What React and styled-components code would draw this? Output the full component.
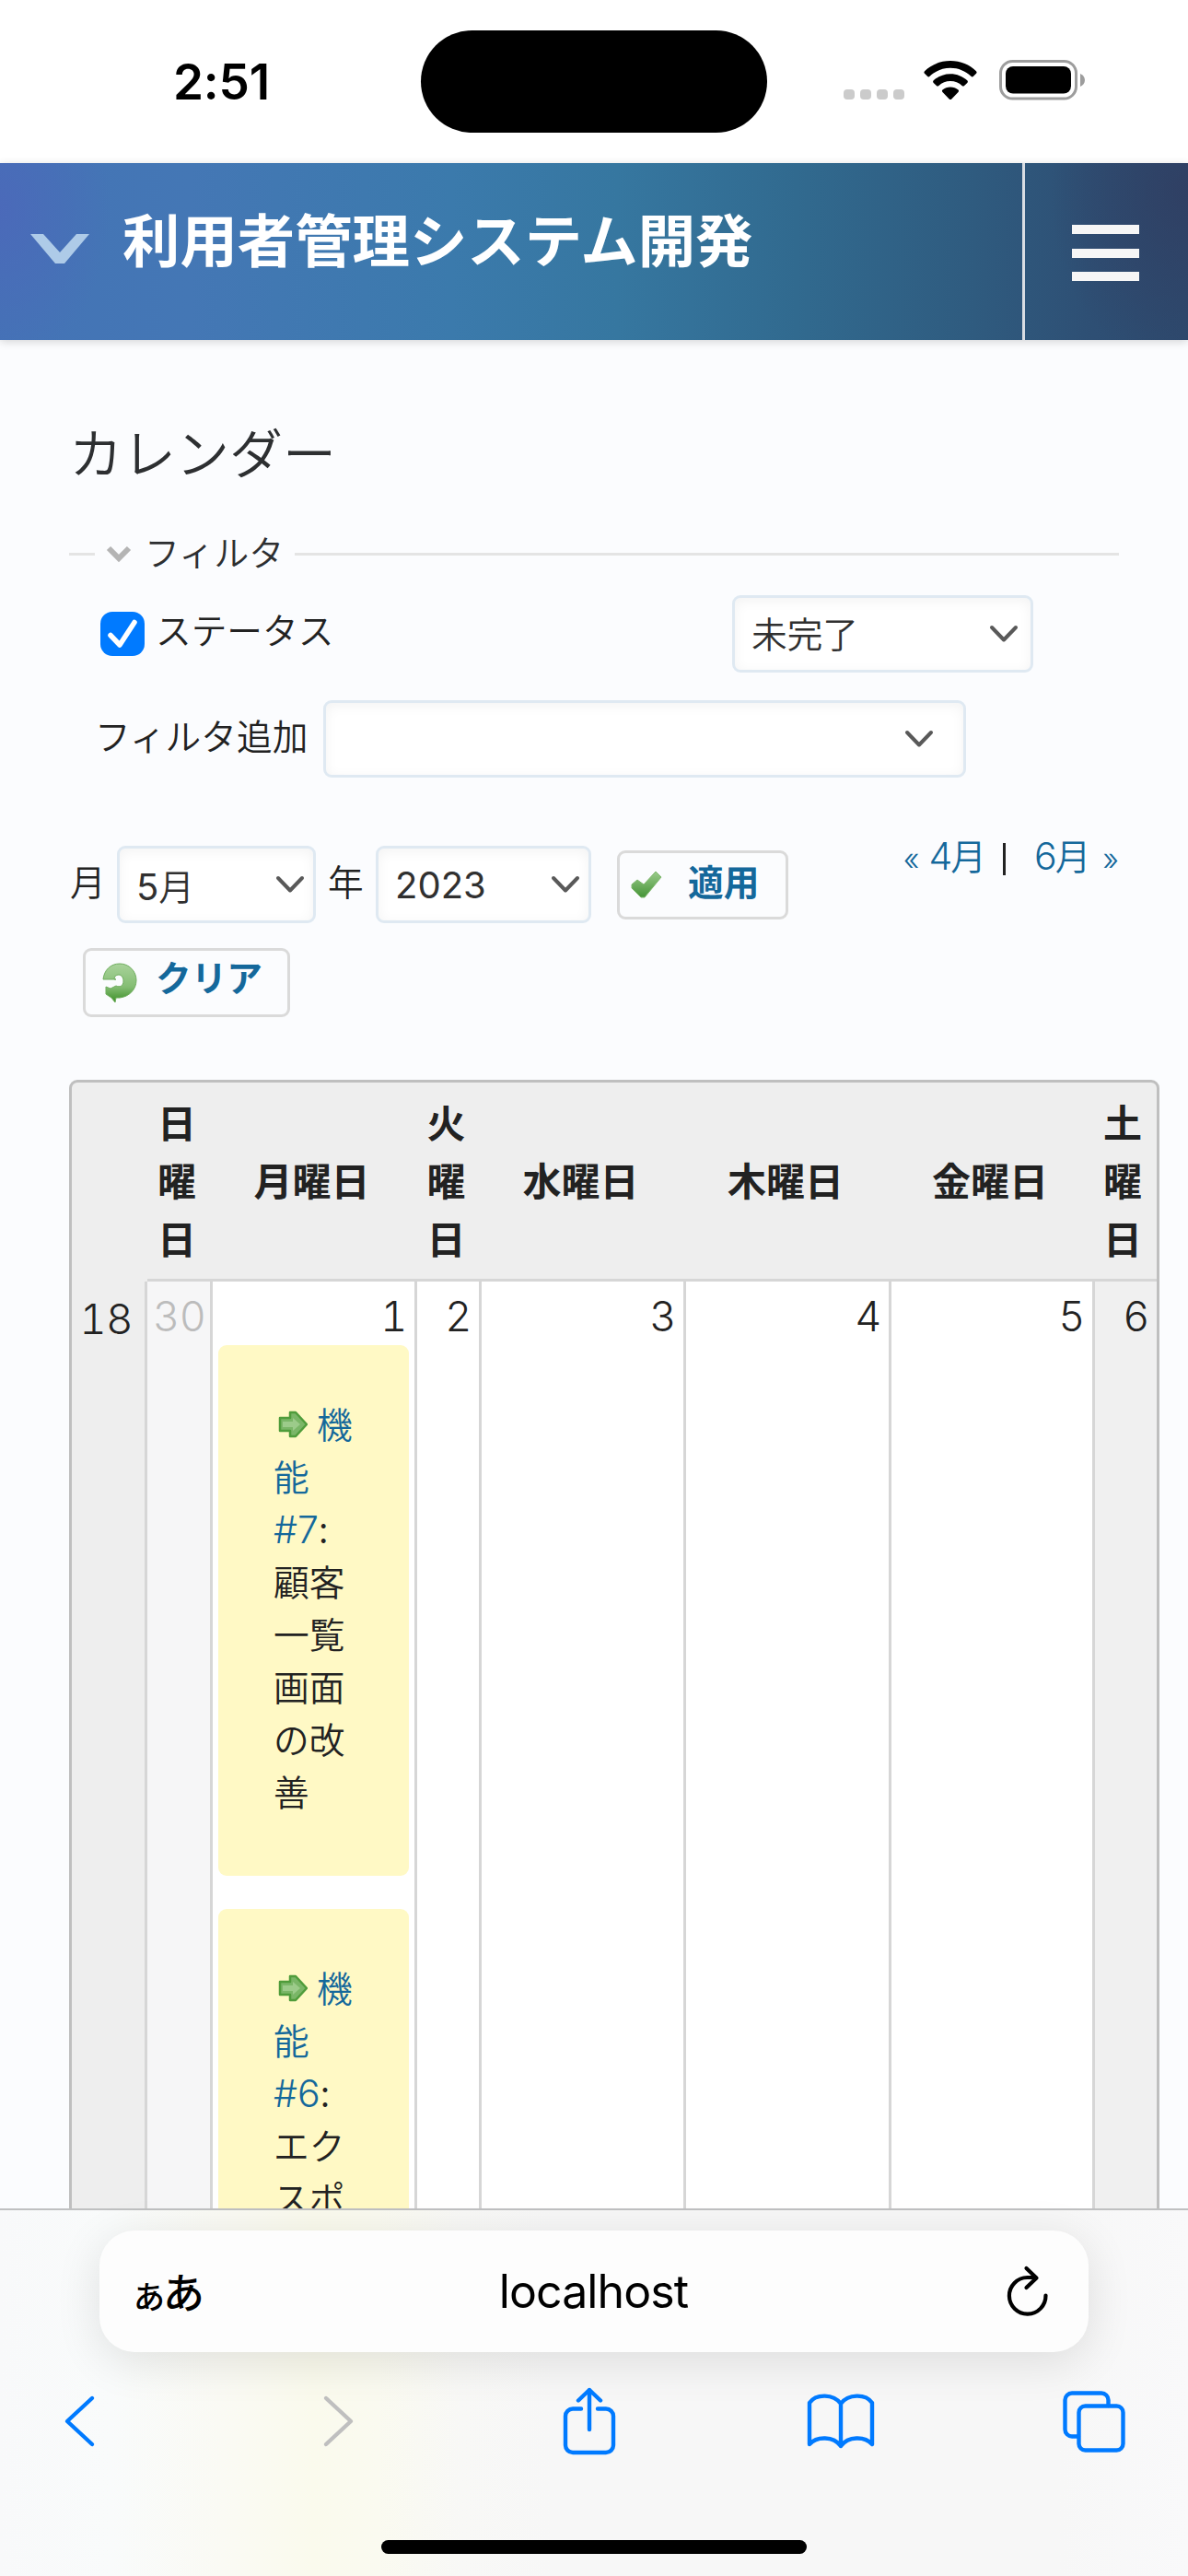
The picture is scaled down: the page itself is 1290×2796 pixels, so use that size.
import styled, { createGlobalStyle } from 'styled-components'

const GlobalStyle = createGlobalStyle`
  * {
    box-sizing: border-box;
  }
  body {
    margin: 0;
    background: #fff;
    font-family: "Noto Sans CJK JP", sans-serif;
    font-weight: 350;
    color: #222;
  }
  svg {
    display: block;
    flex: none;
  }
`

const Screen = styled.div`
  width: 1290px;
  height: 2796px;
  display: flex;
  flex-direction: column;
  overflow: hidden;
`

const StatusBar = styled.div`
  height: 177px;
  flex: none;
  display: grid;
  grid-template-columns: 457px 376px 457px;
  align-items: center;
  background: #fff;
`

const Clock = styled.span`
  padding-left: 188px;
  font: 600 53px/60px Inter, sans-serif;
  letter-spacing: -0.2px;
  color: #000;
`

const Island = styled.div`
  height: 111px;
  border-radius: 56px;
  background: #000;
`

const StatusIcons = styled.div`
  display: flex;
  align-items: center;
  padding: 0 0 3px 83px;
`

const SignalDots = styled.div`
  display: flex;
  gap: 6px;
  margin: 30px 21px 0 0;

  i {
    width: 12px;
    height: 11px;
    border-radius: 4px;
    background: #cbcbcb;
  }
`

const Header = styled.header`
  position: relative;
  height: 192px;
  flex: none;
  display: flex;
  background:
    radial-gradient(ellipse 120px 170px at 0 50px, rgba(76, 104, 186, 0.85), rgba(76, 104, 186, 0)),
    radial-gradient(ellipse 150px 200px at 1290px 30px, rgba(48, 62, 98, 0.85), rgba(48, 62, 98, 0)),
    linear-gradient(90deg, #4473b6 0%, #4477b5 16%, #3b7aac 38%, #3677a0 52%, #316a8f 67%, #2f5b7f 82%, #2e4f74 92%, #2d4a6e 100%);
  box-shadow: 0 2px 9px rgba(0, 0, 0, 0.16);
`

const ProjectPicker = styled.div`
  width: 1110px;
  display: flex;
  align-items: center;
  padding-left: 33px;

  svg {
    margin-bottom: 7px;
  }
`

const ProjectName = styled.h1`
  margin: 0 0 30px 36px;
  font-size: 62.4px;
  line-height: 80px;
  font-weight: 700;
  color: #fff;
`

const MenuButton = styled.div`
  width: 180px;
  border-left: 3px solid #d9dde3;
  padding: 67px 52px 0 51px;
  display: flex;
  flex-direction: column;
  gap: 15.5px;

  i {
    width: 73px;
    height: 10px;
    background: #f6f6f6;
  }
`

const Content = styled.main`
  height: 2028px;
  flex: none;
  overflow: hidden;
  padding: 80px 75px 0;
  background: #fbfcfe;
`

const PageTitle = styled.h2`
  margin: 0;
  font-size: 58px;
  line-height: 80px;
  font-weight: 350;
  color: #2d2f31;
`

const Legend = styled.div`
  display: flex;
  align-items: center;
  height: 60px;
  margin-top: 42px;
  font-size: 38px;
  color: #2d2f31;

  span {
    margin: 0 12px 7px 14px;
  }
`

const Rule = styled.i`
  height: 3px;
  background: #e4e4e4;
  ${({ $width }) => ($width ? `width: ${$width}px; margin-right: 12px;` : 'flex: 1;')}
`

const FilterRow = styled.div`
  display: flex;
  align-items: center;
  height: 84px;
  margin-top: ${({ $top }) => $top}px;
  padding-left: ${({ $left }) => $left}px;
  font-size: 38.7px;
`

const FilterName = styled.span`
  width: 638px;
  padding-left: 12px;
  margin-bottom: 12px;
`

const AddLabel = styled.span`
  width: 248px;
  margin-bottom: 11px;
`

const Checkbox = styled.span`
  width: 48px;
  height: 48px;
  border-radius: 13px;
  background: #007aff;
`

const SelectBox = styled.div`
  width: ${({ $width }) => $width}px;
  height: 84px;
  display: flex;
  align-items: center;
  justify-content: space-between;
  padding: 0 ${({ $right }) => $right || 9}px 0 18px;
  border: 3px solid #dfe9f2;
  border-radius: 9px;
  background: #fff;
  box-shadow: inset 0 3px 14px rgba(0, 0, 0, 0.05);
  font-family: Inter, "Noto Sans CJK JP", sans-serif;
  font-size: ${({ $size }) => $size || 38.7}px;
  font-weight: 400;
  color: #303030;
  white-space: nowrap;

  em {
    font-size: 38.7px;
    font-style: normal;
    font-weight: 350;
    margin-bottom: 5px;
  }
`

const DateForm = styled.div`
  display: flex;
  justify-content: space-between;
  margin-top: 74px;
  font-size: 38.7px;
`

const DateFields = styled.div`
  display: flex;
  flex-wrap: wrap;
  align-items: center;
  width: 790px;
  row-gap: 27px;
`

const FieldLabel = styled.span`
  width: ${({ $width }) => $width}px;
  padding-left: ${({ $left }) => $left || 0}px;
  margin-bottom: 10px;
`

const ActionButton = styled.div`
  height: 75px;
  width: ${({ $width }) => $width}px;
  margin-left: ${({ $left }) => $left}px;
  display: flex;
  align-items: center;
  padding-left: ${({ $pad }) => $pad}px;
  border: 3px solid #dadada;
  border-radius: 9px;
  font-weight: 700;
  color: #14689b;

  span {
    margin: 0 0 ${({ $lift }) => $lift || 11}px ${({ $gap }) => $gap}px;
  }
`

const MonthLinks = styled.div`
  display: flex;
  align-items: baseline;
  height: 40px;
  line-height: 18px;
`

const Link = styled.a`
  color: #14689b;
`

const Latin = styled.span`
  font-family: Inter, sans-serif;
  font-size: 41px;
  font-weight: 300;
`

const Guillemet = styled.span`
  margin: ${({ $end }) => ($end ? '0 0 0 13px' : '0 10px 0 0')};
  font: 300 33px/18px Inter, sans-serif;
`

const MonthLink = styled(Link)`
  ${Latin} {
    letter-spacing: -2px;
  }
`

const Divider = styled.i`
  width: 3px;
  height: 35px;
  margin: 0 31px 0 18px;
  align-self: flex-start;
  transform: translateY(-3px);
  background: #222;
`

const Calendar = styled.div`
  width: 1184px;
  margin-top: 68px;
  display: grid;
  grid-template-columns: 82px 71px 222px 70px 222px 223px 221px 67px;
  grid-template-rows: 216px 1400px;
  border: 3px solid #bfbfbf;
  border-radius: 9px;
  overflow: hidden;
  background: #eee;
`

const DayName = styled.div`
  display: flex;
  align-items: center;
  justify-content: center;
  padding: 0 15px 5px 8px;
  border-bottom: 3px solid ${({ $blank }) => ($blank ? '#eee' : '#d6d6d6')};
  font-size: 42px;
  line-height: 63px;
  font-weight: 700;
  word-break: break-all;
  text-align: center;
`

const DayCell = styled.div`
  padding: 6px 6px 0;
  border-right: ${({ $last }) => ($last ? 0 : 3)}px solid #d6d6d6;
  background: ${({ $bg }) => $bg || '#fff'};
`

const DayNumber = styled.div`
  padding-right: 2px;
  font-family: Inter, sans-serif;
  font-feature-settings: "tnum";
  font-weight: 300;
  font-size: 45px;
  line-height: 63px;
  letter-spacing: -0.4px;
  text-align: right;
  white-space: nowrap;
  color: ${({ $muted }) => ($muted ? '#bcbcbc' : '#222')};
`

const WeekCell = styled(DayCell)`
  padding-top: 9px;

  ${DayNumber} {
    padding-right: 7px;
  }
`

const Issue = styled.div`
  width: 207px;
  height: 576px;
  margin-bottom: 36px;
  padding: 56px 60px 0;
  border-radius: 9px;
  background: #fff9c5;
  font-size: 38.7px;
  line-height: 57px;

  p {
    margin: 0;
    width: 88px;
  }
  svg {
    display: inline-block;
    margin: 0 10px 0 5px;
  }
  ${Latin} {
    line-height: 50px;
  }
`

const BottomBar = styled.footer`
  height: 399px;
  flex: none;
  display: flex;
  flex-direction: column;
  align-items: center;
  border-top: 2px solid #bfc0c1;
  background: linear-gradient(90deg, #f8f9fa 0, #f9fbfb 120px, #fafaf4 240px, #fafaed 340px, #fafaf0 410px, #f8f8f6 500px, #f7f7f7 600px, #f7f7f7 1150px, #f9f9fa 1290px);
`

const AddressBar = styled.div`
  width: 1074px;
  height: 132px;
  margin-top: 22px;
  padding: 0 44px 0 37px;
  display: flex;
  align-items: center;
  justify-content: space-between;
  border-radius: 38px;
  background: #fdfdfd;
  box-shadow: 0 10px 50px rgba(0, 0, 0, 0.11);
  color: #000;
`

const Translate = styled.span`
  width: 90px;
  margin-bottom: 2px;
  font-size: 45px;
  font-weight: 500;
  letter-spacing: -2px;
  white-space: nowrap;

  small {
    font-size: 34px;
  }
`

const Host = styled.span`
  padding-left: 6px;
  font: 400 50px/60px Inter, sans-serif;
  letter-spacing: -0.9px;
`

const NavBar = styled.nav`
  width: 100%;
  height: 150px;
  display: grid;
  grid-template-columns: 163px 276px 267px 280px 169px;
  align-items: center;
  justify-items: center;
  padding: 0 68px 0 67px;

  svg:first-child {
    justify-self: start;
  }
  svg:last-child {
    justify-self: end;
  }
`

const HomeIndicator = styled.div`
  width: 462px;
  height: 15px;
  margin-top: 54px;
  border-radius: 8px;
  background: #000;
`

const ArrowDown = () => (
  <svg width="32" height="20" viewBox="0 0 32 20" fill="none">
    <path d="M3 3l13 13.500L29 3" stroke="#595959" strokeWidth="4" strokeLinecap="round" strokeLinejoin="round" />
  </svg>
)

const WifiIcon = () => (
  <svg width="58" height="43" viewBox="0 0 58 43">
    <path d="M29 0C40 0 50 4.300 57 11.200c.8.8.8 1.800 0 2.600l-3 3c-.8.8-1.800.8-2.600 0C45.500 11.200 37.600 7.800 29 7.800S12.500 11.200 6.600 16.800c-.8.8-1.800.8-2.600 0l-3-3c-.8-.8-.8-1.800 0-2.600C8 4.300 18 0 29 0z" />
    <path d="M29 14.200c7.100 0 13.500 2.700 18.300 7.100.8.8.8 1.800 0 2.600l-3.200 3.100c-.8.8-1.700.7-2.500 0-3.400-3-7.800-4.900-12.600-4.900s-9.200 1.900-12.600 4.900c-.8.7-1.700.8-2.500 0l-3.200-3.100c-.8-.8-.8-1.800 0-2.600 4.800-4.400 11.200-7.100 18.300-7.100z" />
    <path d="M29 28.400c3.200 0 6.200 1.200 8.500 3.200.8.7.8 1.700 0 2.500l-7.200 7.300c-.8.8-1.800.8-2.600 0l-7.200-7.300c-.8-.8-.8-1.800 0-2.500 2.300-2 5.300-3.200 8.500-3.200z" />
  </svg>
)

const BatteryIcon = () => (
  <svg width="95" height="44" viewBox="0 0 95 44">
    <rect x="1.500" y="1.500" width="82" height="40.500" rx="13" fill="none" stroke="#9d9d9d" strokeWidth="3" />
    <rect x="7" y="7" width="71" height="29.500" rx="8" />
    <path d="M88 15v14c3-1.200 5-4 5-7s-2-5.800-5-7z" fill="#9d9d9d" />
  </svg>
)

const CheckIcon = () => (
  <svg width="34" height="32" viewBox="0 0 34 32">
    <defs>
      <linearGradient id="check" x1="0" y1="0" x2="0" y2="1">
        <stop offset="0" stopColor="#9bcb8b" />
        <stop offset="1" stopColor="#459437" />
      </linearGradient>
    </defs>
    <path d="M1 16l6-5 7 5L27 2l6 6-18 22h-4L1 20z" fill="url(#check)" stroke="#7fb86e" strokeWidth="1" />
  </svg>
)

const ReloadGreenIcon = () => (
  <svg width="38" height="44" viewBox="0 0 38 44">
    <defs>
      <linearGradient id="reload" x1="0" y1="0" x2="0" y2="1">
        <stop offset="0" stopColor="#a9d39b" />
        <stop offset="0.6" stopColor="#84bd73" />
        <stop offset="1" stopColor="#3b8f27" />
      </linearGradient>
    </defs>
    <path
      d="M1 18C2 8 9 1 19 1c10 0 18 8 18 18S29 37 19 38l-4 0-1 5-4-5-6-4v-8l5 2 6-3c4 2 8 0 8-5 0-4-2-7-5-7-3 0-5 2-5 5l2 0z"
      fill="url(#reload)"
      stroke="#6fad5e"
      strokeWidth="1"
    />
  </svg>
)

const IssueArrow = () => (
  <svg width="32" height="30" viewBox="0 0 32 30">
    <path d="M2 8h11V2h6l12 13-12 13h-6v-6H2z" fill="#7ab667" stroke="#4f9c3b" strokeWidth="2.500" strokeLinejoin="round" />
    <path d="M5 12h11V8l8 7-8 7v-4H5z" fill="#9ccb8a" />
  </svg>
)

const NavIcon = ({ width, height, color = '#007aff', children }) => (
  <svg width={width} height={height} viewBox={`0 0 ${width} ${height}`} fill="none" stroke={color} strokeWidth="4.400" strokeLinecap="round" strokeLinejoin="round">
    {children}
  </svg>
)

const dayNames = ['', '日曜日', '月曜日', '火曜日', '水曜日', '木曜日', '金曜日', '土曜日']

const issues = [
  { id: 7, subject: '顧客一覧画面の改善' },
  { id: 6, subject: 'エクスポート機能' },
]

const days = [
  { day: 30, muted: true, bg: '#f6f6f7' },
  { day: 1, issues },
  { day: 2 },
  { day: 3 },
  { day: 4 },
  { day: 5 },
  { day: 6, bg: '#f0f0f0' },
]

function App () {
  return (
    <Screen>
      <GlobalStyle />
      <StatusBar>
        <Clock>2:51</Clock>
        <Island />
        <StatusIcons>
          <SignalDots><i /><i /><i /><i /></SignalDots>
          <WifiIcon />
          <svg width="24" height="1" />
          <BatteryIcon />
        </StatusIcons>
      </StatusBar>

      <Header>
        <ProjectPicker>
          <svg width="64" height="32" viewBox="0 0 64 32">
            <path d="M0 0h14l18 20L50 0h14L37 32H27z" fill="#aecbe8" />
          </svg>
          <ProjectName>利用者管理システム開発</ProjectName>
        </ProjectPicker>
        <MenuButton><i /><i /><i /></MenuButton>
      </Header>

      <Content>
        <PageTitle>カレンダー</PageTitle>
        <Legend>
          <Rule $width={28} />
          <svg width="28" height="19" viewBox="0 0 28 19">
            <path d="M3 3l11 11L25 3" fill="none" stroke="#b4b4b4" strokeWidth="6" />
          </svg>
          <span>フィルタ</span>
          <Rule />
        </Legend>
        <FilterRow $top={15} $left={34}>
          <Checkbox>
            <svg width="48" height="48" viewBox="0 0 48 48">
              <path d="M11 25.500l10 10.500L37 11.500" fill="none" stroke="#fff" strokeWidth="5.500" strokeLinecap="round" strokeLinejoin="round" />
            </svg>
          </Checkbox>
          <FilterName>ステータス</FilterName>
          <SelectBox $width={327} $right={13}>
            <em>未完了</em>
            <ArrowDown />
          </SelectBox>
        </FilterRow>
        <FilterRow $top={30} $left={28}>
          <AddLabel>フィルタ追加</AddLabel>
          <SelectBox $width={698} $right={32}>
            <em />
            <ArrowDown />
          </SelectBox>
        </FilterRow>

        <DateForm>
          <DateFields>
            <FieldLabel $width={52} $left={1}>月</FieldLabel>
            <SelectBox $width={216} $size={40}>
              <span>5<em>月</em></span>
              <ArrowDown />
            </SelectBox>
            <FieldLabel $width={65} $left={13}>年</FieldLabel>
            <SelectBox $width={234} $size={40}>
              <span>2023</span>
              <ArrowDown />
            </SelectBox>
            <ActionButton $width={186} $left={28} $pad={12} $gap={28}>
              <CheckIcon />
              <span>適用</span>
            </ActionButton>
            <ActionButton $width={225} $left={15} $pad={18} $gap={20} $lift={15}>
              <ReloadGreenIcon />
              <span>クリア</span>
            </ActionButton>
          </DateFields>
          <MonthLinks>
            <MonthLink><Guillemet>«</Guillemet><Latin>4</Latin>月</MonthLink>
            <Divider />
            <MonthLink><Latin>6</Latin>月<Guillemet $end>»</Guillemet></MonthLink>
          </MonthLinks>
        </DateForm>

        <Calendar>
          {dayNames.map((name) => (
            <DayName key={name} $blank={!name}>{name}</DayName>
          ))}
          <WeekCell $bg="#eee">
            <DayNumber>18</DayNumber>
          </WeekCell>
          {days.map(({ day, muted, bg, issues: items = [] }) => (
            <DayCell key={day} $bg={bg} $last={day === 6}>
              <DayNumber $muted={muted}>{day}</DayNumber>
              {items.map(({ id, subject }) => (
                <Issue key={id}>
                  <p>
                    <IssueArrow />
                    <Link>機能 <Latin>{`#${id}`}</Latin></Link>{`: ${subject}`}
                  </p>
                </Issue>
              ))}
            </DayCell>
          ))}
        </Calendar>
      </Content>

      <BottomBar>
        <AddressBar>
          <Translate><small>あ</small>あ</Translate>
          <Host>localhost</Host>
          <svg width="90" height="56" viewBox="0 0 90 56" fill="none" stroke="#000" strokeWidth="4.200" strokeLinecap="round" strokeLinejoin="round">
            <path d="M87.500 32.500A19.800 19.800 0 1 1 67.500 13h9.500M66.500 3l11 10.500L66.500 24" />
          </svg>
        </AddressBar>
        <NavBar>
          <NavIcon width={38} height={60}>
            <path d="M33 5L6 30l27 25" />
          </NavIcon>
          <NavIcon width={38} height={60} color="#bfbfbf">
            <path d="M5 5l27 25L5 55" />
          </NavIcon>
          <NavIcon width={58} height={74}>
            <path d="M20 23.500H11a8 8 0 0 0-8 8V63a8 8 0 0 0 8 8h36a8 8 0 0 0 8-8V31.500a8 8 0 0 0-8-8h-9M29 46V3M17 14.500L29 3l12 11.500" />
          </NavIcon>
          <NavIcon width={74} height={62}>
            <path d="M37 12C29 1 10 1 3 11v45c8-9 26-9 34 2 8-11 26-11 34-2V11C64 1 45 1 37 12v46" />
          </NavIcon>
          <NavIcon width={68} height={67}>
            <rect x="17.500" y="16.500" width="48" height="48" rx="7" />
            <path d="M17 49.500h-7a7.500 7.500 0 0 1-7.500-7.500V10A7.500 7.500 0 0 1 10 2.500h32a7.500 7.500 0 0 1 7.500 7.500v6" />
          </NavIcon>
        </NavBar>
        <HomeIndicator />
      </BottomBar>
    </Screen>
  )
}

export default App
